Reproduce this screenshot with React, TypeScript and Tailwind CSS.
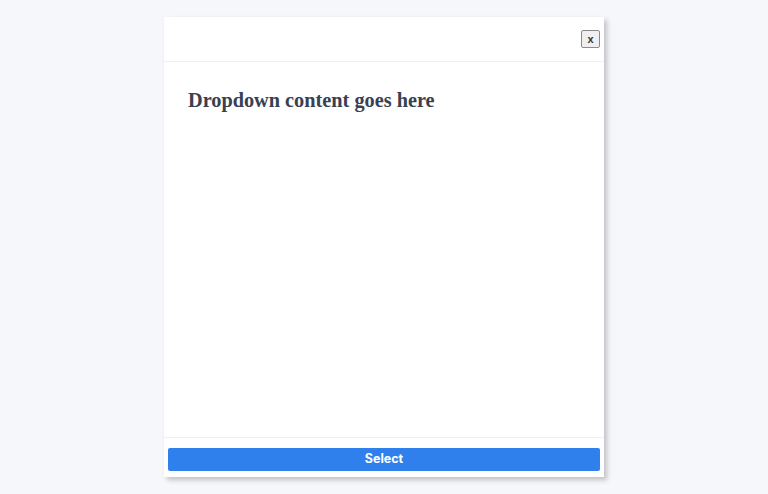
import React from 'react';

export default function App() {
  return (
    <div className="w-full h-[494px] bg-[#f5f7fb] flex items-center justify-center">
      {/* Dropdown panel */}
      <div className="w-[440px] h-[460px] bg-white flex flex-col shadow-[3px_3px_5px_rgba(0,0,0,0.22)]">
        <div className="h-[45px] shrink-0 flex items-center justify-end pr-[4px] border-b border-[#efefef]">
          <button className="w-[19px] h-[18px] flex items-center justify-center border border-[#8a8a8a] rounded-[2px] bg-[#efefef] text-[11px] leading-none font-bold text-[#333] font-['Liberation_Sans',sans-serif]">
            x
          </button>
        </div>

        <div className="flex-1 min-h-0 px-6 pt-[24px]">
          <h2 className="text-[20.3px] leading-[28px] font-bold text-[#374151] font-['Liberation_Serif',serif]">
            Dropdown content goes here
          </h2>
        </div>

        <div className="shrink-0 border-t border-[#efefef] px-[4px] pt-[7px] pb-[6px]">
          <button className="w-full h-[23px] bg-[#2f80ed] rounded-[2px] text-white text-[12.5px] font-bold font-['Inter',sans-serif] leading-none">
            Select
          </button>
        </div>
      </div>
    </div>
  );
}
